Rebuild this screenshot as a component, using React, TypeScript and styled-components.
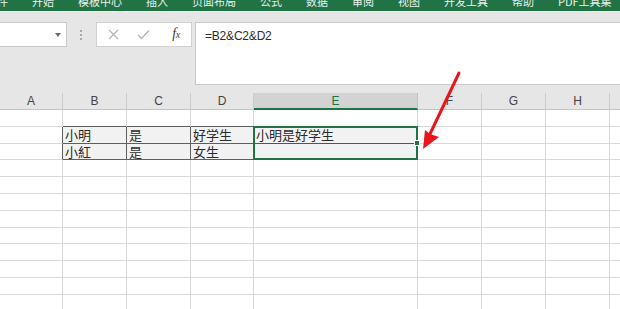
import React from "react";
import styled, { createGlobalStyle } from "styled-components";

const Global = createGlobalStyle`
  html, body { margin: 0; padding: 0; }
  body {
    width: 620px;
    height: 309px;
    overflow: hidden;
    background: #e6e6e6;
    font-family: "Noto Sans CJK SC", "Noto Sans", sans-serif;
  }
`;

const GREEN = "#217346";
const DARK = "#5e5e5e";
const GRID = "#d9d9d9";
const COLS = "63px 64px 64px 63px 164px 64px 64px 64px 64px";

const Page = styled.div`
  position: relative;
  width: 620px;
  height: 309px;
  overflow: hidden;
  display: flex;
  flex-direction: column;
  background: #e6e6e6;
`;

const Ribbon = styled.div`
  height: 11px;
  flex: none;
  background: ${GREEN};
  overflow: hidden;
`;

const TabList = styled.div`
  display: flex;
  gap: 24px;
  margin-left: -3px;
  margin-top: -4px;
`;

const Tab = styled.span`
  font-family: "Noto Sans CJK SC", sans-serif;
  font-size: 11px;
  line-height: 11px;
  color: #e9f1ec;
  white-space: nowrap;
`;

const Toolbar = styled.div`
  height: 82px;
  flex: none;
  box-sizing: border-box;
  padding-top: 10px;
  display: flex;
  align-items: flex-start;
  border-top: 1px solid #ececec;
`;

const NameBox = styled.div`
  position: relative;
  width: 68px;
  height: 25px;
  margin-left: -1px;
  box-sizing: border-box;
  background: #fff;
  border: 1px solid #c9c9c9;
`;

const DropArrow = styled.span`
  position: absolute;
  right: 5px;
  top: 10px;
  width: 0;
  height: 0;
  border-left: 3px solid transparent;
  border-right: 3px solid transparent;
  border-top: 4px solid #6a6a6a;
`;

const Dots = styled.div`
  margin: 8px 0 0 13px;
  display: flex;
  flex-direction: column;
  gap: 2px;
`;

const Dot = styled.span`
  width: 2px;
  height: 2px;
  background: #a9a9a9;
`;

const ButtonBox = styled.div`
  margin-left: 14px;
  width: 96px;
  height: 25px;
  box-sizing: border-box;
  background: #fff;
  border: 1px solid #d2d2d2;
  display: grid;
  grid-template-columns: 32px 29px 34px;
  align-items: center;
  justify-items: center;
`;

const Fx = styled.span`
  font-family: "Liberation Serif", serif;
  font-style: italic;
  font-size: 14px;
  line-height: 14px;
  color: #3c3c3c;
  letter-spacing: -0.5px;
  margin-left: 2px;
  & > small {
    font-size: 10px;
  }
`;

const FormulaBox = styled.div`
  margin-left: 3px;
  flex: 1;
  margin-right: -2px;
  height: 63px;
  box-sizing: border-box;
  background: #fff;
  border: 1px solid #c9c9c9;
  padding: 5px 0 0 9px;
  font-family: "Liberation Sans", sans-serif;
  font-size: 12px;
  line-height: 16px;
  letter-spacing: -0.2px;
  color: #2b2b2b;
`;

const HeaderRow = styled.div`
  display: grid;
  grid-template-columns: ${COLS};
  height: 17px;
  flex: none;
`;

const HeaderCell = styled.div<{ $active?: boolean }>`
  box-sizing: border-box;
  height: 17px;
  border-right: 1px solid ${(p) => (p.$active ? "#c4c4c4" : "#cdcdcd")};
  border-bottom: ${(p) => (p.$active ? `2px solid ${GREEN}` : "1px solid #c4c4c4")};
  background: ${(p) => (p.$active ? "#d3d3d3" : "#e6e6e6")};
  color: ${(p) => (p.$active ? GREEN : "#444")};
  font-family: "Liberation Sans", sans-serif;
  font-size: 12px;
  line-height: 16px;
  text-align: center;
`;

const Sheet = styled.div`
  display: grid;
  grid-template-columns: ${COLS};
  grid-auto-rows: 16.8px;
  background: #fff;
  flex: 1;
`;

const Cell = styled.div<{ $bg: string; $rc: string; $bc: string }>`
  position: relative;
  box-sizing: border-box;
  background: ${(p) => p.$bg};
  border-right: 1px solid ${(p) => p.$rc};
  border-bottom: 1px solid ${(p) => p.$bc};
  padding-left: 2px;
  font-family: "Noto Sans CJK SC", sans-serif;
  font-size: 13px;
  line-height: 15px;
  color: #2a2a2a;
  white-space: nowrap;
`;

const Selection = styled.div`
  position: absolute;
  left: -1px;
  right: -1px;
  top: -1px;
  height: 34.6px;
  box-sizing: border-box;
  border: 2px solid ${GREEN};
  z-index: 2;
  pointer-events: none;
`;

const FillHandle = styled.span`
  position: absolute;
  right: -4px;
  top: 12px;
  width: 4px;
  height: 4px;
  background: ${GREEN};
  border: 1px solid #fff;
`;

const Overlay = styled.svg`
  position: absolute;
  left: 0;
  top: 0;
  pointer-events: none;
  z-index: 5;
`;

const tabs = ["件", "开始", "模板中心", "插入", "页面布局", "公式", "数据", "审阅", "视图", "开发工具", "帮助", "PDF工具集"];
const letters = ["A", "B", "C", "D", "E", "F", "G", "H", "I"];
const data: Record<string, string> = {
  "1-1": "小明",
  "1-2": "是",
  "1-3": "好学生",
  "1-4": "小明是好学生",
  "2-1": "小紅",
  "2-2": "是",
  "2-3": "女生",
};
const ROWS = 12;

export default function App() {
  const cells: React.ReactNode[] = [];
  for (let r = 0; r < ROWS; r++) {
    for (let c = 0; c < letters.length; c++) {
      const inRows = r >= 1 && r <= 2;
      const rc = inRows && c <= 3 ? DARK : GRID;
      let bc = r <= 2 && c >= 1 && c <= 3 ? DARK : GRID;
      if (r === 1 && c === 4) bc = GREEN;
      const bg = inRows && c >= 1 && c <= 4 ? "#f2f2f2" : "#fff";
      cells.push(
        <Cell key={`${r}-${c}`} $bg={bg} $rc={rc} $bc={bc}>
          {data[`${r}-${c}`] ?? ""}
          {r === 1 && c === 4 && (
            <Selection>
              <FillHandle />
            </Selection>
          )}
        </Cell>
      );
    }
  }

  return (
    <Page>
      <Global />
      <Ribbon>
        <TabList>
          {tabs.map((t) => (
            <Tab key={t}>{t}</Tab>
          ))}
        </TabList>
      </Ribbon>
      <Toolbar>
        <NameBox>
          <DropArrow />
        </NameBox>
        <Dots>
          <Dot />
          <Dot />
          <Dot />
        </Dots>
        <ButtonBox>
          <svg width="11" height="11" viewBox="0 0 11 11">
            <path d="M1 1 L10 10 M10 1 L1 10" stroke="#b3b3b3" strokeWidth="1.2" fill="none" />
          </svg>
          <svg width="13" height="11" viewBox="0 0 13 11">
            <path d="M1 6 L4.5 9.5 L12 1.5" stroke="#b3b3b3" strokeWidth="1.3" fill="none" />
          </svg>
          <Fx>
            f<small>x</small>
          </Fx>
        </ButtonBox>
        <FormulaBox>=B2&amp;C2&amp;D2</FormulaBox>
      </Toolbar>
      <HeaderRow>
        {letters.map((l) => (
          <HeaderCell key={l} $active={l === "E"}>
            {l}
          </HeaderCell>
        ))}
      </HeaderRow>
      <Sheet>{cells}</Sheet>
      <Overlay width="620" height="309" viewBox="0 0 620 309">
        <line x1="459" y1="73" x2="430" y2="134" stroke="#e8161c" strokeWidth="3" strokeLinecap="round" />
        <polygon points="423,149 425,130 430,134 439,137" fill="#e8161c" />
      </Overlay>
    </Page>
  );
}
